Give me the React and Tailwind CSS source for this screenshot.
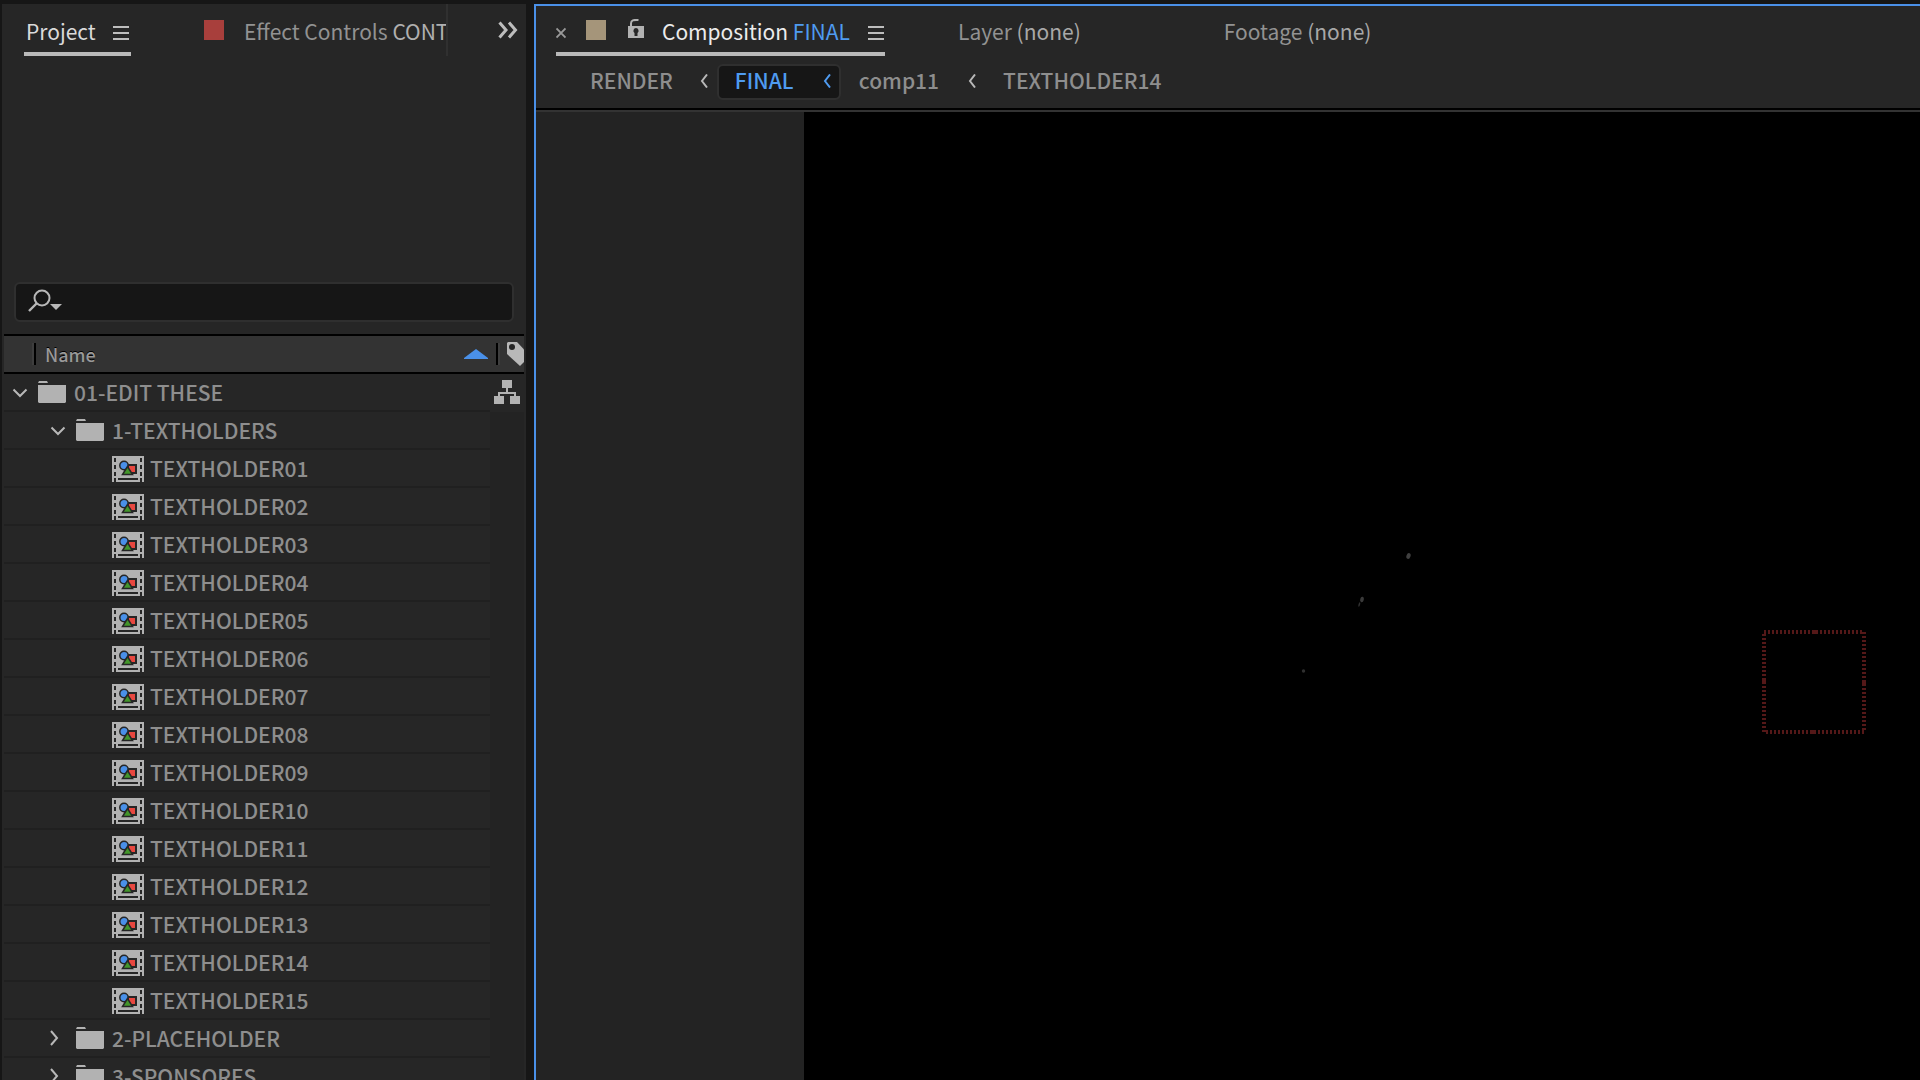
import React, { useState } from 'react';

const holders = Array.from({ length: 15 }, (_, i) => `TEXTHOLDER${String(i + 1).padStart(2, '0')}`);

const MenuIcon = () => (
  <svg width="16" height="18" viewBox="0 0 16 18" fill="#bdbdbd" className="shrink-0">
    <path d="M0 3h16v2H0zM0 9h16v2H0zM0 15h16v2H0z" />
  </svg>
);

const FolderIcon = () => (
  <svg width="28" height="22" viewBox="0 0 28 22" fill="#b2b2b2" className="shrink-0">
    <path d="M0 2L1 0h8l1 2zM0 4h28v17l-1 1H1l-1-1z" />
  </svg>
);

const CompIcon = () => (
  <svg width="32" height="26" viewBox="0 0 32 26" className="mt-0.5 shrink-0">
    <path d="M0 0h32v26H0z" fill="#b2b2b2" />
    <path d="M2 2h2v4H2zM2 9h2v4H2zM2 16h2v4H2zM2 22h2v4H2zM28 2h2v4h-2zM28 9h2v4h-2zM28 16h2v4h-2zM28 22h2v4h-2zM6 22h20v2H6z" fill="#262626" />
    <path d="M15 8h10v10H15z" fill="#262626" />
    <path d="M17 10h6v6h-6z" fill="#e8473f" />
    <circle cx="12" cy="9.5" r="4.2" fill="#4a90e8" stroke="#262626" strokeWidth="1.5" />
    <path d="M15.5 10.5L20.5 18.5H10.5z" fill="#43962b" stroke="#262626" strokeWidth="1.5" />
  </svg>
);

const TreeArrow = ({ open }) => (
  <svg width="16" height="16" viewBox="0 0 16 16" fill="none" stroke="#b8b8b8" strokeWidth="2">
    <path d={open ? 'M1.5 5.5L8 12l6.5-6.5' : 'M1 1l6 7-6 7'} />
  </svg>
);

const CrumbArrow = ({ className }) => (
  <svg width="8" height="14" viewBox="0 0 8 14" fill="none" stroke="currentColor" strokeWidth="2" className={className}>
    <path d="M7 0.5L2 7l5 6.5" />
  </svg>
);

const FlowchartIcon = () => (
  <svg width="26" height="24" viewBox="0 0 26 24" fill="#b2b2b2" className="ml-1 mb-0.5">
    <path d="M8 0h10v8H8zM12 8h2v4h-2zM4 12h18v2H4zM4 14h2v2H4zM20 14h2v2h-2zM0 16h10v8H0zM16 16h10v8H16z" />
  </svg>
);

function FolderRow({ name, level, open, onToggle, flowchart }) {
  return (
    <tr>
      <td className="h-[38px] border-b-2 border-[#202020] p-0">
        <div className={`flex items-center ${level === 0 ? 'pl-2' : 'pl-[46px]'}`}>
          <button onClick={onToggle} aria-label={name} className="mr-[10px]">
            <TreeArrow open={open} />
          </button>
          <FolderIcon />
          <span className="ml-2 leading-9">{name}</span>
        </div>
      </td>
      <td className={`p-0 ${flowchart ? '' : 'bg-[#232323]'}`}>{flowchart && <FlowchartIcon />}</td>
    </tr>
  );
}

function ProjectPanel() {
  const [busqueda, setBusqueda] = useState('');
  const [rootOpen, setRootOpen] = useState(true);
  const [holdersOpen, setHoldersOpen] = useState(true);

  const visibles = holders.filter(h => h.toLowerCase().includes(busqueda.toLowerCase()));

  return (
    <section className="w-[524px] shrink-0 bg-[#262626] overflow-hidden">
      <div className="flex items-center h-[52px] pl-[22px]">
        <button className="flex items-center justify-between w-[107px] h-full pt-2 px-0.5 border-b-4 border-[#b9b9b9] text-[#dadada]">
          Project <MenuIcon />
        </button>
        <button className="flex items-center h-full ml-[73px] pt-2 pb-1 w-[244px] overflow-hidden whitespace-nowrap border-r-2 border-[#303030] text-[#929292]">
          <span className="size-5 shrink-0 mr-5 mb-1 bg-[#a83f3c]"></span>
          Effect Controls&nbsp;<span className="text-[#b0b0b0]">CONT</span>
        </button>
        <button aria-label="More panels" className="ml-[50px]">
          <svg width="20" height="18" viewBox="0 0 20 18" fill="none" stroke="#bdbdbd" strokeWidth="3">
            <path d="M1.5 1.5L8 9l-6.5 7.5M11 1.5L17.5 9 11 16.5" />
          </svg>
        </button>
      </div>

      <label className="flex items-center h-10 mt-[226px] mx-3 pl-2.5 pb-0.5 bg-[#161616] border-2 border-[#2f2f2f] rounded-md">
        <svg width="36" height="26" viewBox="0 0 36 26" fill="none" stroke="#b8b8b8" strokeWidth="2" className="shrink-0">
          <circle cx="16" cy="10" r="7.5" />
          <path d="M10.5 15.5L3 23" strokeWidth="2.4" />
          <path d="M24 16h12l-6 6z" fill="#b8b8b8" stroke="none" />
        </svg>
        <input type="text" aria-label="Search" value={busqueda} onChange={(e) => setBusqueda(e.target.value)} className="flex-1 min-w-0 px-2 bg-transparent outline-none text-[#b8b8b8]" />
      </label>

      <div className="mt-3 mx-0.5">
        <table className="w-full table-fixed border-separate border-spacing-0 font-medium text-[#8e8e8e]">
          <thead className="bg-[#333333] text-[18px]">
            <tr>
              <th className="h-10 p-0 border-y-2 border-black font-medium">
                <div className="flex items-center pl-7">
                  <span className="w-1 h-[22px] border-l-2 border-r-2 border-l-[#3e3e3e] border-r-black"></span>
                  <span className="ml-[9px] leading-9 text-[#999999] [text-shadow:0_-1px_#000]">Name</span>
                  <svg width="24" height="10" viewBox="0 0 24 10" fill="#4a90e8" className="ml-auto mr-0.5">
                    <path d="M12 0l12 9v1H0V9z" />
                  </svg>
                </div>
              </th>
              <th className="w-[34px] p-0 border-y-2 border-black">
                <div className="flex items-center overflow-hidden pl-1.5">
                  <span className="w-1 h-[22px] shrink-0 border-l-2 border-r-2 border-l-black border-r-[#3e3e3e]"></span>
                  <svg width="24" height="24" viewBox="0 0 24 24" className="ml-[7px] shrink-0">
                    <path d="M1 0h9l13 14-10 10L0 12V1z" fill="#b8b8b8" />
                    <circle cx="5" cy="5" r="3" fill="#262626" />
                  </svg>
                </div>
              </th>
            </tr>
          </thead>
          <tbody>
            <FolderRow name="01-EDIT THESE" level={0} open={rootOpen} onToggle={() => setRootOpen(!rootOpen)} flowchart />
            {rootOpen && <FolderRow name="1-TEXTHOLDERS" level={1} open={holdersOpen} onToggle={() => setHoldersOpen(!holdersOpen)} />}
            {rootOpen && holdersOpen && visibles.map(h => (
              <tr key={h}>
                <td className="h-[38px] border-b-2 border-[#202020] p-0">
                  <div className="flex items-center pl-[108px]">
                    <CompIcon />
                    <span className="ml-1.5 leading-9">{h}</span>
                  </div>
                </td>
                <td className="p-0 bg-[#232323]"></td>
              </tr>
            ))}
            {rootOpen && <FolderRow name="2-PLACEHOLDER" level={1} />}
            {rootOpen && <FolderRow name="3-SPONSORES" level={1} />}
          </tbody>
        </table>
      </div>
    </section>
  );
}

function CompositionPanel() {
  return (
    <section className="flex flex-col flex-1 min-w-0 ml-2 border-l-2 border-t-2 border-[#4a90e8] bg-[#262626]">
      <div className="flex h-[50px] pl-5 whitespace-nowrap text-[#929292]">
        <div className="flex items-center w-[329px] pt-1.5 border-b-4 border-[#b9b9b9]">
          <button aria-label="Close">
            <svg width="10" height="18" viewBox="0 0 10 18" fill="none" stroke="#999" strokeWidth="1.8">
              <path d="M0.5 5.5l9 9M9.5 5.5l-9 9" />
            </svg>
          </button>
          <span className="size-5 ml-5 mb-1 bg-[#a5957a]"></span>
          <button aria-label="Lock" className="ml-[22px]">
            <svg width="16" height="26" viewBox="0 0 16 26">
              <path d="M3 8V4.5C3 1.5 5.5 0.5 10.5 1" fill="none" stroke="#b2b2b2" strokeWidth="2" />
              <path d="M0 7h16v12H0z" fill="#b2b2b2" />
              <path d="M8 9a2.8 2.8 0 0 1 1.5 5V17h-3v-3A2.8 2.8 0 0 1 8 9z" fill="#262626" />
            </svg>
          </button>
          <button className="ml-[18px] text-[#ececec]">Composition <span className="text-[#4f9bf0]">FINAL</span></button>
          <button aria-label="Panel menu" className="ml-auto mr-px"><MenuIcon /></button>
        </div>
        <button className="ml-[73px] pt-1.5 pb-1">Layer <span className="text-[#a8a8a8]">(none)</span></button>
        <button className="ml-[143px] pt-1.5 pb-1">Footage <span className="text-[#a8a8a8]">(none)</span></button>
      </div>

      <nav className="flex items-center h-[52px] pl-[54px] whitespace-nowrap font-medium text-[#8e8e8e]">
        <a href="#render" className="pb-0.5">RENDER</a>
        <CrumbArrow className="ml-[27px] mb-0.5 text-[#b8b8b8]" />
        <a href="#final" className="flex items-center justify-between w-[124px] h-9 ml-[9px] pl-4 pr-2 pb-0.5 rounded-md bg-[#161616] border-2 border-[#2f2f2f] text-[#4f9bf0]">
          FINAL <CrumbArrow />
        </a>
        <a href="#comp11" className="ml-[18px] pb-0.5">comp11</a>
        <CrumbArrow className="ml-[29px] mb-0.5 text-[#b8b8b8]" />
        <a href="#textholder14" className="ml-[27px] pb-0.5">TEXTHOLDER14</a>
      </nav>

      <div className="flex flex-1 border-t-2 border-black">
        <div className="flex flex-1 border-t-2 border-[#333333]">
          <div className="w-[268px] shrink-0 bg-[#232323]"></div>
          <div className="relative flex-1 overflow-hidden bg-black">
            {/* layer content: three faint specks */}
            <svg width="120" height="130" viewBox="0 0 120 130" className="absolute left-[490px] top-[438px]">
              <ellipse cx="114.5" cy="6" rx="2" ry="3" fill="#404040" transform="rotate(20 114.5 6)" />
              <ellipse cx="68" cy="49.5" rx="1.8" ry="2.8" fill="#3a3a3a" transform="rotate(15 68 49.5)" />
              <ellipse cx="65.3" cy="54.5" rx="0.8" ry="2.4" fill="#303030" transform="rotate(15 65.3 54.5)" />
              <circle cx="9.5" cy="121" r="1.7" fill="#303030" />
            </svg>
            {/* selection bounds */}
            <svg width="104" height="104" viewBox="0 0 104 104" fill="none" stroke="#541818" strokeWidth="4" className="absolute left-[958px] top-[518px]">
              <path d="M2 2H102M4 102H104M2 4V104M102 2V102" strokeDasharray="2 2" />
              <path d="M50 2h6M48 102h6M2 48v6M102 50v6" />
            </svg>
          </div>
        </div>
      </div>
    </section>
  );
}

export default function App() {
  return (
    <main className="flex h-screen overflow-hidden pt-1 pl-0.5 bg-[#161616] text-[21px] font-['Noto_Sans_CJK_JP','Open_Sans',sans-serif]">
      <ProjectPanel />
      <CompositionPanel />
    </main>
  );
}
